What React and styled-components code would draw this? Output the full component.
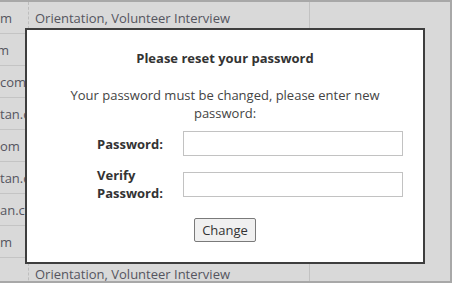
import React from 'react';
import styled, { createGlobalStyle } from 'styled-components';

const GlobalStyle = createGlobalStyle`
  html, body {
    margin: 0;
    padding: 0;
    background: #ffffff;
  }
  * {
    box-sizing: border-box;
  }
`;

const Frame = styled.div`
  position: relative;
  width: 452px;
  height: 283px;
  overflow: hidden;
  background: #d9d9d9;
  border: 2px solid #a8a8a8;
  border-left: 0;
  font-family: 'Open Sans', 'Liberation Sans', sans-serif;
`;

const Row = styled.div`
  display: grid;
  grid-template-columns: 29px 281px 1fr;
  height: 32px;
`;

const Cell = styled.div`
  display: flex;
  align-items: center;
  overflow: hidden;
  white-space: nowrap;
  font-size: 13px;
  color: #55555f;
  border-bottom: ${p => (p.$plain ? '0' : '1px solid #c4c4c4')};
`;

const EmailCell = styled(Cell)`
  border-right: 1px dashed #bdbdbd;
  text-indent: ${p => p.$shift || 0}px;
`;

const TaskCell = styled(Cell)`
  padding-left: 6px;
  border-right: 1px solid #c2c2c2;
`;

const Overlay = styled.div`
  position: absolute;
  left: 25px;
  top: 26px;
  width: 400px;
  height: 236px;
  background: #ffffff;
  border: 2px solid #3e3e3e;
  padding: 19px 20px 0 20px;
  display: flex;
  flex-direction: column;
  align-items: center;
  color: #444444;
`;

const Title = styled.h2`
  margin: 0;
  font-size: 13px;
  line-height: 18px;
  font-weight: 700;
  color: #333333;
`;

const Message = styled.p`
  margin: 19px 0 0 0;
  width: 330px;
  text-align: center;
  font-size: 13px;
  line-height: 18px;
  color: #444444;
`;

const Form = styled.form`
  align-self: flex-end;
  margin-top: 9px;
  display: grid;
  grid-template-columns: 72px 220px;
  column-gap: 14px;
  row-gap: 10px;
  align-items: center;
`;

const Label = styled.label`
  font-size: 13px;
  line-height: 18px;
  font-weight: 700;
  color: #333333;
`;

const Input = styled.input`
  width: 220px;
  height: 25px;
  margin: 0;
  border: 1px solid #c2c2c2;
  background: #ffffff;
  outline: none;
`;

const Actions = styled.div`
  margin-top: 16px;
`;

const Button = styled.button`
  width: 62px;
  height: 24px;
  padding: 0;
  font-family: 'Open Sans', 'Liberation Sans', sans-serif;
  font-size: 13px;
  color: #333333;
  background: #f0f0f0;
  border: 1px solid #7a7a7a;
  border-radius: 2px;
`;

const rows = [
  { email: 'm', shift: 0 },
  { email: 'm', shift: -3 },
  { email: 'com', shift: 0 },
  { email: 'tan.com', shift: 0 },
  { email: 'om', shift: 0 },
  { email: 'tan.com', shift: 0 },
  { email: 'an.com', shift: 0 },
  { email: 'm', shift: 0 },
  { email: '', shift: 0 },
];

export default function App() {
  return (
    <>
      <GlobalStyle />
      <Frame>
        {rows.map((r, i) => (
          <Row key={i}>
            <EmailCell $shift={r.shift}>{r.email}</EmailCell>
            <TaskCell>
              {i === 0 || i === rows.length - 1
                ? 'Orientation, Volunteer Interview'
                : ''}
            </TaskCell>
            <Cell $plain />
          </Row>
        ))}
        <Overlay>
          <Title>Please reset your password</Title>
          <Message>
            Your password must be changed, please enter new password:
          </Message>
          <Form onSubmit={e => e.preventDefault()}>
            <Label htmlFor="pw">Password:</Label>
            <Input id="pw" type="password" />
            <Label htmlFor="pw2">Verify Password:</Label>
            <Input id="pw2" type="password" />
          </Form>
          <Actions>
            <Button type="button">Change</Button>
          </Actions>
        </Overlay>
      </Frame>
    </>
  );
}
